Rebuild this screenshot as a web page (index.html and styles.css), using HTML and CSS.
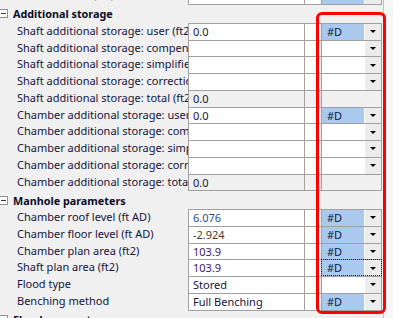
FILE: index.html
```html
<!DOCTYPE html>
<html lang="en">
<head>
    <meta charset="UTF-8">
    <meta name="viewport" content="width=device-width, initial-scale=1.0">
    <title>Manhole properties</title>
    <link rel="stylesheet" href="styles.css">
</head>
<body>
    <div class="panel">
        <div class="grid">
            <div class="rows first">
                <div class="row">
                    <div class="label">Chamber area (ft2)</div>
                    <div class="cell"></div>
                    <div class="cell"></div>
                    <div class="cell combo"><span class="flag blue"></span><span class="drop"></span></div>
                </div>
            </div>

            <div class="group"><span class="toggle"></span>Additional storage</div>
            <div class="rows">
                <div class="row">
                    <div class="label">Shaft additional storage: user (ft2)</div>
                    <div class="cell">0.0</div>
                    <div class="cell"></div>
                    <div class="cell combo"><span class="flag blue">#D</span><span class="drop"></span></div>
                </div>
                <div class="row">
                    <div class="label">Shaft additional storage: compensation (ft2)</div>
                    <div class="cell"></div>
                    <div class="cell"></div>
                    <div class="cell combo"><span class="flag"></span><span class="drop"></span></div>
                </div>
                <div class="row">
                    <div class="label">Shaft additional storage: simplified (ft2)</div>
                    <div class="cell"></div>
                    <div class="cell"></div>
                    <div class="cell combo"><span class="flag"></span><span class="drop"></span></div>
                </div>
                <div class="row">
                    <div class="label">Shaft additional storage: correction (ft2)</div>
                    <div class="cell"></div>
                    <div class="cell"></div>
                    <div class="cell combo"><span class="flag"></span><span class="drop"></span></div>
                </div>
                <div class="row">
                    <div class="label">Shaft additional storage: total (ft2)</div>
                    <div class="cell ro">0.0</div>
                    <div class="cell ro"></div>
                    <div class="cell ro"></div>
                </div>
                <div class="row">
                    <div class="label">Chamber additional storage: user (ft2)</div>
                    <div class="cell">0.0</div>
                    <div class="cell"></div>
                    <div class="cell combo"><span class="flag blue">#D</span><span class="drop"></span></div>
                </div>
                <div class="row">
                    <div class="label">Chamber additional storage: compensation (ft2)</div>
                    <div class="cell"></div>
                    <div class="cell"></div>
                    <div class="cell combo"><span class="flag"></span><span class="drop"></span></div>
                </div>
                <div class="row">
                    <div class="label">Chamber additional storage: simplified (ft2)</div>
                    <div class="cell"></div>
                    <div class="cell"></div>
                    <div class="cell combo"><span class="flag"></span><span class="drop"></span></div>
                </div>
                <div class="row">
                    <div class="label">Chamber additional storage: correction (ft2)</div>
                    <div class="cell"></div>
                    <div class="cell"></div>
                    <div class="cell combo"><span class="flag"></span><span class="drop"></span></div>
                </div>
                <div class="row">
                    <div class="label">Chamber additional storage: total (ft2)</div>
                    <div class="cell ro">0.0</div>
                    <div class="cell ro"></div>
                    <div class="cell ro"></div>
                </div>
            </div>

            <div class="group"><span class="toggle"></span>Manhole parameters</div>
            <div class="rows">
                <div class="row">
                    <div class="label">Chamber roof level (ft AD)</div>
                    <div class="cell v-blue">6.076</div>
                    <div class="cell"></div>
                    <div class="cell combo"><span class="flag blue">#D</span><span class="drop"></span></div>
                </div>
                <div class="row">
                    <div class="label">Chamber floor level (ft AD)</div>
                    <div class="cell v-olive">-2.924</div>
                    <div class="cell"></div>
                    <div class="cell combo"><span class="flag blue">#D</span><span class="drop"></span></div>
                </div>
                <div class="row">
                    <div class="label">Chamber plan area (ft2)</div>
                    <div class="cell v-purple">103.9</div>
                    <div class="cell"></div>
                    <div class="cell combo"><span class="flag blue">#D</span><span class="drop"></span></div>
                </div>
                <div class="row">
                    <div class="label">Shaft plan area (ft2)</div>
                    <div class="cell v-purple">103.9</div>
                    <div class="cell"></div>
                    <div class="cell combo focus"><span class="flag blue">#D</span><span class="drop"></span></div>
                </div>
                <div class="row">
                    <div class="label">Flood type</div>
                    <div class="cell">Stored</div>
                    <div class="cell"></div>
                    <div class="cell combo"><span class="flag"></span><span class="drop"></span></div>
                </div>
                <div class="row">
                    <div class="label">Benching method</div>
                    <div class="cell">Full Benching</div>
                    <div class="cell"></div>
                    <div class="cell combo"><span class="flag blue">#D</span><span class="drop"></span></div>
                </div>
            </div>

            <div class="group"><span class="toggle"></span>Flood parameters</div>
        </div>
        <div class="vscroll"></div>
    </div>

    <div class="highlight"></div>
</body>
</html>
```

FILE: styles.css
```css
* {
    box-sizing: border-box;
}
html, body {
    margin: 0;
    height: 100%;
    overflow: hidden;
}
body {
    background-color: #f0f0f0;
    font-family: "Noto Sans", "Open Sans", sans-serif;
    font-size: 11px;
    color: #14143c;
}
.panel {
    display: flex;
    height: 100%;
}
.grid {
    width: 384px;
    border-right: 1px solid #c4c4c4;
}
.vscroll {
    flex: 1;
    background-color: #f6f6f6;
}
.rows.first {
    margin-top: -12.75px;
}
.rows::after {
    content: '';
    display: block;
    margin-left: 188px;
    width: 194px;
    height: 1px;
    background-color: #a0a0a0;
}
.row {
    display: grid;
    grid-template-columns: 188px 116px 17px 61px;
    height: 16.75px;
}
.label {
    padding-left: 17px;
    white-space: nowrap;
    overflow: hidden;
    line-height: 16px;
}
.cell {
    background-color: #fff;
    border-left: 1px solid #a0a0a0;
    border-top: 1px solid #a0a0a0;
    padding-left: 4px;
    white-space: nowrap;
    overflow: hidden;
    line-height: 15px;
}
.cell:last-child {
    border-right: 1px solid #a0a0a0;
}
.cell.ro {
    background-color: #f0f0f0;
}
.v-blue {
    color: #26508a;
}
.v-olive {
    color: #4a3c22;
}
.v-purple {
    color: #42185e;
}
.combo {
    display: flex;
    padding-left: 0;
}
.flag {
    flex: 1;
    padding-left: 5px;
}
.flag.blue {
    background-color: #a9c9ef;
}
.drop {
    width: 17px;
    border-left: 1px solid #fff;
    background-color: #ececec;
    display: flex;
    align-items: center;
    justify-content: center;
}
.drop::after {
    content: '';
    border-left: 3px solid transparent;
    border-right: 3px solid transparent;
    border-top: 3px solid #000;
}
.combo.focus {
    outline: 1px dotted #222;
    outline-offset: -1px;
}
.group {
    height: 17.75px;
    display: flex;
    align-items: center;
    font-weight: bold;
    font-size: 10.8px;
    color: #0c0c28;
}
.toggle {
    width: 9px;
    height: 9px;
    margin-left: -1px;
    margin-right: 5px;
    border: 1px solid #919191;
    background-color: #fff;
    display: flex;
    align-items: center;
    justify-content: center;
}
.toggle::after {
    content: '';
    width: 5px;
    height: 1px;
    background-color: #3a3a3a;
}
.highlight {
    position: absolute;
    left: 316px;
    top: 12px;
    width: 70px;
    height: 302px;
    border: 3px solid #ff0000;
    border-radius: 6px;
}
```
